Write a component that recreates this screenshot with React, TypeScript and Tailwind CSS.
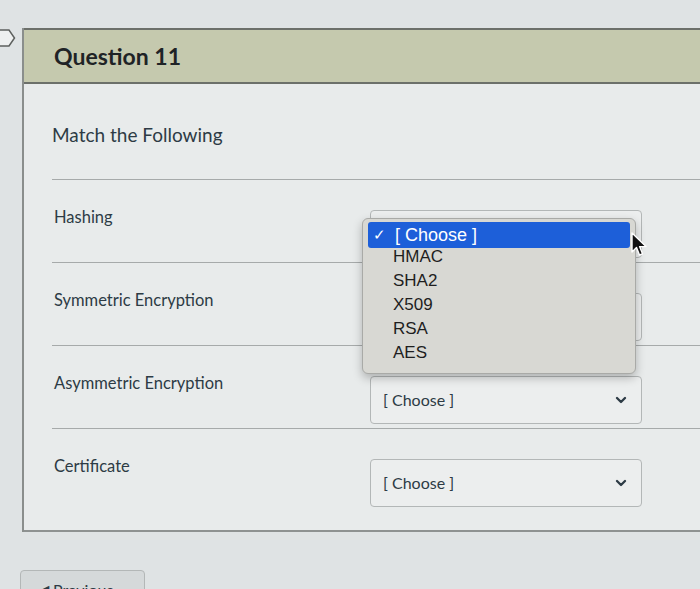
import { ChevronDown } from 'lucide-react'

const rows = [
  { label: 'Hashing', covered: true },
  { label: 'Symmetric Encryption', covered: true },
  { label: 'Asymmetric Encryption', covered: false },
  { label: 'Certificate', covered: false },
]

const options = ['HMAC', 'SHA2', 'X509', 'RSA', 'AES']

function SelectBox({ hidden }: { hidden?: boolean }) {
  return (
    <div className="flex h-[48px] w-[272px] items-center justify-between rounded-[4px] border border-[#b3b7b7] bg-[#eceeee] pl-[12px] pr-[12px]">
      <span className={`text-[16px] text-[#2d3b45] ${hidden ? 'invisible' : ''}`}>[ Choose ]</span>
      <ChevronDown className="h-4 w-4 text-[#2d3b45]" strokeWidth={3.5} />
    </div>
  )
}

function Dropdown() {
  return (
    <div className="absolute left-[362px] top-[218px] w-[274px] rounded-[6px] border border-[#a9aaa7] bg-[#d8d8d3] pb-[8px] pt-[3px] shadow-[0_4px_10px_rgba(0,0,0,0.25)] font-['Liberation_Sans',sans-serif]">
      <div className="mx-[5px] flex h-[26px] items-center rounded-[3px] bg-[#1d5fd9] pl-[5px] text-[18px] text-white">
        <span className="w-[22px] text-[15px]">✓</span>
        <span>[ Choose ]</span>
      </div>
      <div className="-mt-[3px]">
        {options.map((o) => (
          <div key={o} className="flex h-[24px] items-center pl-[30px] text-[17px] text-[#1e1e1e]">
            {o}
          </div>
        ))}
      </div>
    </div>
  )
}

function Cursor() {
  return (
    <svg className="absolute left-[630px] top-[232px]" width="20" height="26" viewBox="0 0 20 26">
      <path d="M2 1 L2 20 L6.5 15.5 L9.5 23 L12.5 21.8 L9.6 14.6 L16 14.6 Z" fill="#111" stroke="#fff" strokeWidth="1.4" strokeLinejoin="round" />
    </svg>
  )
}

export default function App() {
  return (
    <div className="relative h-[589px] w-[700px] overflow-hidden bg-[#dfe3e4] font-['Lato',sans-serif] text-[#2d3b45]">
      <div className="flex pt-[28px]">
        <div className="w-[22px] shrink-0">
          <svg width="16" height="18" viewBox="0 0 16 18" className="mt-[1px]">
            <path d="M-2 1 L9 1 L14.5 9 L9 17 L-2 17 Z" fill="#eef0f0" stroke="#5d605e" strokeWidth="1.5" />
          </svg>
        </div>
        <div className="flex-1 border-l-2 border-[#8a8e8c]">
          <div className="flex h-[56px] items-center border-y-2 border-[#6c706a] bg-[#c5c9ae] pl-[30px]">
            <h2 className="text-[23px] font-bold text-[#1f2326]">Question 11</h2>
          </div>
          <div className="border-b-2 border-[#8e9291] bg-[#e8ebeb] pb-[18px] pl-[28px]">
            <div className="flex h-[96px] items-center border-b border-[#a6aaaa] pt-[8px]">
              <p className="text-[19px]">Match the Following</p>
            </div>
            {rows.map((r, i) => (
              <div
                key={r.label}
                className={`flex h-[83px] items-start ${i < rows.length - 1 ? 'border-b border-[#a6aaaa]' : ''}`}
              >
                <div className="mt-[25px] w-[318px] shrink-0 pl-[2px] text-[16.5px]">{r.label}</div>
                <div className="mt-[30px]">
                  <SelectBox hidden={r.covered} />
                </div>
              </div>
            ))}
          </div>
        </div>
      </div>
      <div className="ml-[20px] mt-[38px] flex h-[40px] w-[125px] items-center rounded-[4px] border border-[#b3b7b7] bg-[#d5d9da] pl-[16px] text-[16px]">
        ◀ Previous
      </div>
      <Dropdown />
      <Cursor />
    </div>
  )
}
